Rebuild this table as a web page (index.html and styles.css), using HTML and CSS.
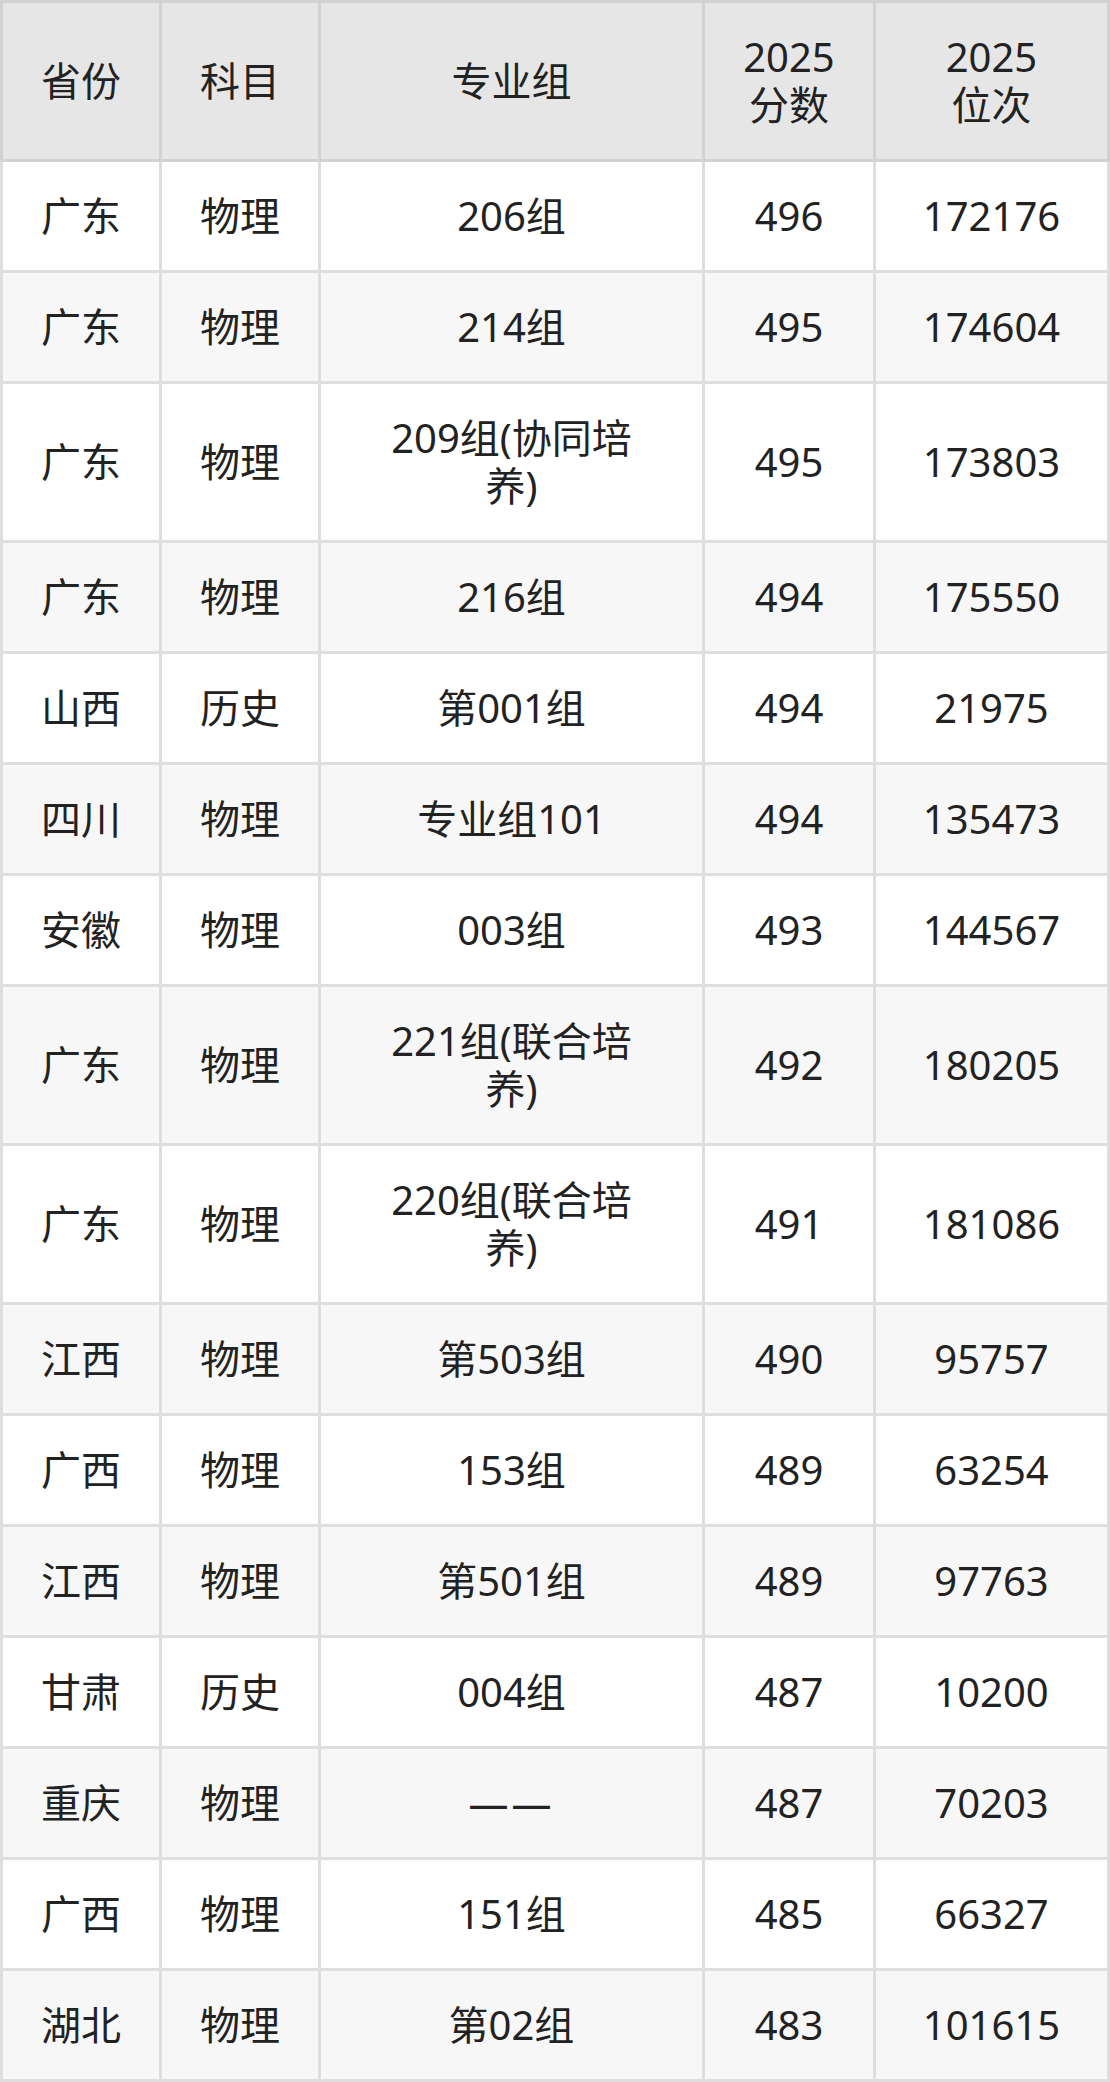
FILE: index.html
```html
<!DOCTYPE html>
<html lang="zh-CN">
<head>
<meta charset="utf-8">
<title>录取分数</title>
<link rel="stylesheet" href="styles.css">
</head>
<body>
<table class="score-table">
  <colgroup>
    <col class="c-prov">
    <col class="c-subj">
    <col class="c-grp">
    <col class="c-score">
    <col class="c-rank">
  </colgroup>
  <thead>
    <tr>
      <th>省份</th>
      <th>科目</th>
      <th class="grp">专业组</th>
      <th>2025<br>分数</th>
      <th>2025<br>位次</th>
    </tr>
  </thead>
  <tbody>
    <tr><td>广东</td><td>物理</td><td class="grp">206组</td><td>496</td><td>172176</td></tr>
    <tr><td>广东</td><td>物理</td><td class="grp">214组</td><td>495</td><td>174604</td></tr>
    <tr><td>广东</td><td>物理</td><td class="grp">209组(协同培养)</td><td>495</td><td>173803</td></tr>
    <tr><td>广东</td><td>物理</td><td class="grp">216组</td><td>494</td><td>175550</td></tr>
    <tr><td>山西</td><td>历史</td><td class="grp">第001组</td><td>494</td><td>21975</td></tr>
    <tr><td>四川</td><td>物理</td><td class="grp">专业组101</td><td>494</td><td>135473</td></tr>
    <tr><td>安徽</td><td>物理</td><td class="grp">003组</td><td>493</td><td>144567</td></tr>
    <tr><td>广东</td><td>物理</td><td class="grp">221组(联合培养)</td><td>492</td><td>180205</td></tr>
    <tr><td>广东</td><td>物理</td><td class="grp">220组(联合培养)</td><td>491</td><td>181086</td></tr>
    <tr><td>江西</td><td>物理</td><td class="grp">第503组</td><td>490</td><td>95757</td></tr>
    <tr><td>广西</td><td>物理</td><td class="grp">153组</td><td>489</td><td>63254</td></tr>
    <tr><td>江西</td><td>物理</td><td class="grp">第501组</td><td>489</td><td>97763</td></tr>
    <tr><td>甘肃</td><td>历史</td><td class="grp">004组</td><td>487</td><td>10200</td></tr>
    <tr><td>重庆</td><td>物理</td><td class="grp dash">——</td><td>487</td><td>70203</td></tr>
    <tr><td>广西</td><td>物理</td><td class="grp">151组</td><td>485</td><td>66327</td></tr>
    <tr><td>湖北</td><td>物理</td><td class="grp">第02组</td><td>483</td><td>101615</td></tr>
  </tbody>
</table>
</body>
</html>
```

FILE: styles.css
```css
html, body {
  margin: 0;
  padding: 0;
  background: #ffffff;
}

.score-table {
  width: 1110px;
  table-layout: fixed;
  border-collapse: separate;
  border-spacing: 0;
  font-family: "Noto Sans", "Noto Sans CJK SC", sans-serif;
  font-size: 40px;
  line-height: 48px;
  color: #222222;
}

.c-prov { width: 162px; }
.c-subj { width: 159px; }
.c-grp { width: 384px; }
.c-score { width: 171px; }
.c-rank { width: 234px; }

.score-table th,
.score-table td {
  box-sizing: border-box;
  padding: 30px 35px;
  text-align: center;
  vertical-align: middle;
  font-weight: normal;
  border-right: 3px solid #dedede;
  border-bottom: 3px solid #dedede;
  overflow-wrap: break-word;
}

.score-table th:first-child,
.score-table td:first-child {
  border-left: 3px solid #dedede;
}

.score-table th {
  background: #e6e6e6;
  border-top: 3px solid #d2d2d2;
  border-right-color: #d2d2d2;
  border-bottom-color: #d2d2d2;
}

.score-table th:first-child {
  border-left-color: #d2d2d2;
}

.score-table .grp {
  padding-left: 65px;
  padding-right: 65px;
}

.score-table .dash {
  font-family: "Noto Sans", sans-serif;
  letter-spacing: 3px;
}

.score-table tbody tr:nth-child(even) td {
  background: #f7f7f7;
}
```
